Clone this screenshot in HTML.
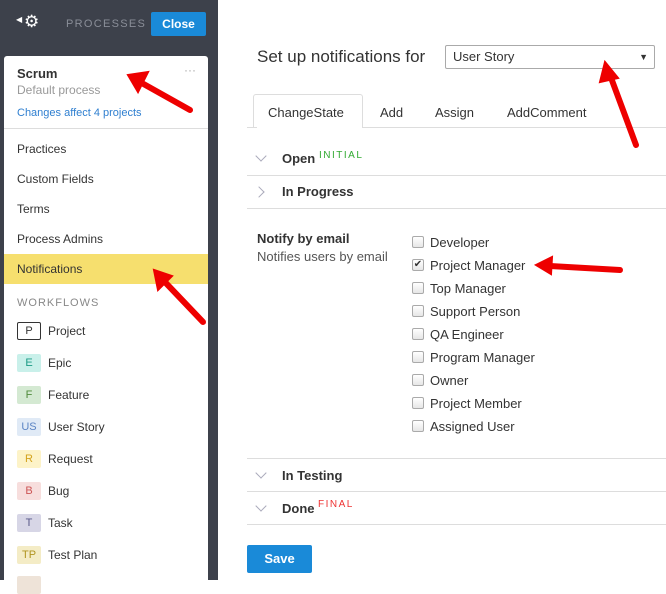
<!DOCTYPE html><html><head><style>
*{margin:0;padding:0;box-sizing:border-box}
body{width:666px;height:580px;overflow:hidden;background:#fff;font-family:"Liberation Sans",sans-serif;position:relative;color:#333}
.a{position:absolute;white-space:nowrap}
.side{position:absolute;left:0;top:0;width:218px;height:580px;background:#3d414b}
.card{position:absolute;left:4px;top:56px;width:204px;height:524px;background:#fff;border-radius:3px 3px 0 0}
.it{font-size:12px;color:#333}
.badge{position:absolute;left:17px;width:24px;height:18px;border-radius:2px;font-size:11px;text-align:center;line-height:18px}
.cb{position:absolute;left:412px;width:12px;height:12px;border:1px solid #aaa;border-radius:2px;background:linear-gradient(#fff,#e6e6e6)}
.cl{font-size:13px;color:#333;left:430px}
.hr{position:absolute;left:247px;right:0;height:1px;background:#ddd}
.st{font-size:13px;font-weight:bold;color:#333;left:282px}
.chev{position:absolute;left:257px;width:8px;height:8px;border-right:1.5px solid #aab;border-bottom:1.5px solid #aab}
</style></head><body>
<div class="side"></div>
<div class="a" style="left:16px;top:15px;color:#fff;font-size:8px">◀</div>
<div class="a" style="left:24px;top:12px;color:#fff;font-size:17px;line-height:20px">⚙</div>
<div class="a" style="left:66px;top:18px;color:#8a8e98;font-size:11px;letter-spacing:1.3px">PROCESSES</div>
<div class="a" style="left:151px;top:12px;width:55px;height:24px;background:#1a8ad8;border-radius:2px;color:#fff;font-size:12px;font-weight:bold;text-align:center;line-height:24px">Close</div>
<div class="card"></div>
<div class="a" style="left:17px;top:66px;font-size:13px;font-weight:bold;color:#333">Scrum</div>
<div class="a" style="left:184px;top:63px;font-size:12px;color:#aaa">···</div>
<div class="a" style="left:17px;top:83px;font-size:12px;color:#999">Default process</div>
<div class="a" style="left:17px;top:107px;font-size:11px;color:#2f7fd0">Changes affect 4 projects</div>
<div class="a" style="left:4px;top:128px;width:204px;height:1px;background:#ddd"></div>
<div class="a it" style="left:17px;top:142px">Practices</div>
<div class="a it" style="left:17px;top:172px">Custom Fields</div>
<div class="a it" style="left:17px;top:202px">Terms</div>
<div class="a it" style="left:17px;top:232px">Process Admins</div>
<div class="a" style="left:4px;top:254px;width:204px;height:30px;background:#f6df6e"></div>
<div class="a it" style="left:17px;top:262px">Notifications</div>
<div class="a" style="left:17px;top:297px;font-size:11px;color:#888;letter-spacing:1px">WORKFLOWS</div>
<div class="badge" style="top:322px;border:1px solid #333;line-height:16px;color:#333">P</div><div class="a it" style="left:48px;top:324px">Project</div>
<div class="badge" style="top:354px;background:#c9f0ea;color:#1a9a85">E</div><div class="a it" style="left:48px;top:356px">Epic</div>
<div class="badge" style="top:386px;background:#d4e9d2;color:#4f8a3a">F</div><div class="a it" style="left:48px;top:388px">Feature</div>
<div class="badge" style="top:418px;background:#e0eaf6;color:#5b84c4">US</div><div class="a it" style="left:48px;top:420px">User Story</div>
<div class="badge" style="top:450px;background:#fdf3c8;color:#d3a21c">R</div><div class="a it" style="left:48px;top:452px">Request</div>
<div class="badge" style="top:482px;background:#f7dedd;color:#c55">B</div><div class="a it" style="left:48px;top:484px">Bug</div>
<div class="badge" style="top:514px;background:#d7d6e6;color:#5a5a8a">T</div><div class="a it" style="left:48px;top:516px">Task</div>
<div class="badge" style="top:546px;background:#f4ecc6;color:#b09420">TP</div><div class="a it" style="left:48px;top:548px">Test Plan</div>
<div class="badge" style="top:576px;background:#eee3d8"></div>

<div class="a" style="left:257px;top:47px;font-size:17px;color:#333">Set up notifications for</div>
<div class="a" style="left:445px;top:45px;width:210px;height:24px;border:1px solid #aaa;border-radius:2px;font-size:13px;line-height:22px;padding-left:7px;color:#333">User Story<span style="position:absolute;right:6px;font-size:9px">▼</span></div>
<div class="a" style="left:253px;top:94px;width:110px;height:34px;border:1px solid #ddd;border-bottom:none;border-radius:3px 3px 0 0;background:#fff"></div>
<div class="hr" style="top:127px;left:247px;width:10px"></div><div class="hr" style="top:127px;left:363px"></div>
<div class="a" style="left:268px;top:105px;font-size:13px">ChangeState</div>
<div class="a" style="left:380px;top:105px;font-size:13px">Add</div>
<div class="a" style="left:435px;top:105px;font-size:13px">Assign</div>
<div class="a" style="left:507px;top:105px;font-size:13px">AddComment</div>
<div class="chev" style="top:152px;transform:rotate(45deg)"></div>
<div class="a st" style="top:151px">Open</div><div class="a" style="left:319px;top:150px;font-size:10px;color:#3a3;letter-spacing:1.5px">INITIAL</div>
<div class="hr" style="top:175px"></div>
<div class="chev" style="top:188px;left:255px;transform:rotate(-45deg)"></div>
<div class="a st" style="top:184px">In Progress</div>
<div class="hr" style="top:208px"></div>
<div class="a" style="left:257px;top:231px;font-size:13px;font-weight:bold">Notify by email</div>
<div class="a" style="left:257px;top:249px;font-size:13px;color:#555">Notifies users by email</div>
<div class="cb" style="top:236px"></div><div class="a cl" style="top:235px">Developer</div>
<div class="cb" style="top:259px;font-size:10px;line-height:10px;text-align:center">✔</div><div class="a cl" style="top:258px">Project Manager</div>
<div class="cb" style="top:282px"></div><div class="a cl" style="top:281px">Top Manager</div>
<div class="cb" style="top:305px"></div><div class="a cl" style="top:304px">Support Person</div>
<div class="cb" style="top:328px"></div><div class="a cl" style="top:327px">QA Engineer</div>
<div class="cb" style="top:351px"></div><div class="a cl" style="top:350px">Program Manager</div>
<div class="cb" style="top:374px"></div><div class="a cl" style="top:373px">Owner</div>
<div class="cb" style="top:397px"></div><div class="a cl" style="top:396px">Project Member</div>
<div class="cb" style="top:420px"></div><div class="a cl" style="top:419px">Assigned User</div>
<div class="hr" style="top:458px"></div>
<div class="chev" style="top:469px;transform:rotate(45deg)"></div>
<div class="a st" style="top:468px">In Testing</div>
<div class="hr" style="top:491px"></div>
<div class="chev" style="top:502px;transform:rotate(45deg)"></div>
<div class="a st" style="top:501px">Done</div><div class="a" style="left:318px;top:499px;font-size:10px;color:#e33;letter-spacing:1.5px">FINAL</div>
<div class="hr" style="top:524px"></div>
<div class="a" style="left:247px;top:545px;width:65px;height:28px;background:#1a8ad8;border-radius:2px;color:#fff;font-size:13px;font-weight:bold;text-align:center;line-height:28px">Save</div>

<svg class="a" style="left:0;top:0" width="666" height="580">
<g stroke="#e00" stroke-width="6" stroke-linecap="round" fill="#e00">
<line x1="190" y1="110" x2="140" y2="82"/><polygon points="128,75 148,72 138,92" stroke-width="2"/>
<line x1="203" y1="322" x2="163" y2="280"/><polygon points="154,270 172,276 158,290" stroke-width="2"/>
<line x1="636" y1="145" x2="610" y2="75"/><polygon points="605,62 618,78 600,82" stroke-width="2"/>
<line x1="620" y1="270" x2="550" y2="266"/><polygon points="536,265 552,257 551,274" stroke-width="2"/>
</g></svg>
</body></html>
